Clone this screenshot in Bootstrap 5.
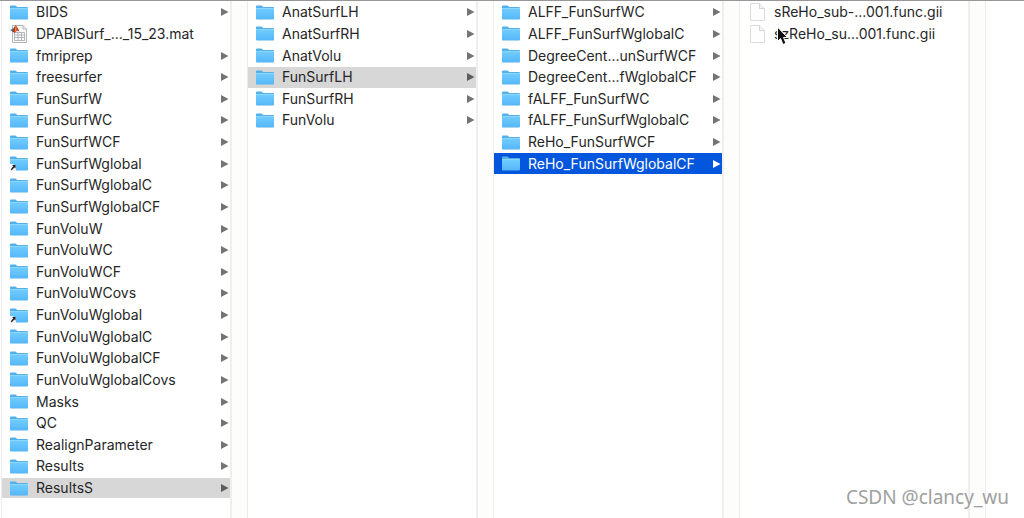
<!DOCTYPE html>
<html lang="en">
<head>
<meta charset="utf-8">
<meta name="viewport" content="width=device-width, initial-scale=1">
<title>ResultsS</title>
<link href="https://cdn.jsdelivr.net/npm/bootstrap@5.3.0/dist/css/bootstrap.min.css" rel="stylesheet">
<style>
  body { font-family: Inter, "Liberation Sans", sans-serif; font-size: 14px; color: #262626; background: #fff; }
  .browser { display: grid; grid-template-columns: 246fr 246fr 246fr 246fr 39fr; height: 100vh; border-top: 1px solid #999799; padding-left: 1px; }
  .pane { border-left: 1px solid #ececec; min-width: 0; }
  .files { display: grid; grid-template-rows: repeat(24, 1fr); row-gap: 1px; height: 100vh; padding-top: 1px; box-sizing: content-box; }
  .gutter { width: 17px; background: #fdfdfb; border-left: 2px solid #efefef; }
  .entry { font-size: 14px; line-height: 20px; padding: 0 1px 0 8px; gap: 8px; border: 0; background: none; color: inherit; white-space: nowrap; min-height: 0; }
  .entry svg { flex: none; }
  .entry .tri { fill: #747474; }
  .entry.open { background: #d7d7d7; }
  .entry.open .tri { fill: #5c5c5c; }
  .entry.current { background: #0456dc; color: #fff; }
  .entry.current .tri { fill: #fff; }
  .pointer { left: 776px; top: 26px; }
  .credit { right: 15px; bottom: 6px; font: 19px/30px "Noto Sans", sans-serif; color: #a0a0a0; text-shadow: 1px 0 0 #fff; }
</style>
</head>
<body class="overflow-hidden">
<svg width="0" height="0" class="position-absolute" aria-hidden="true">
  <defs>
    <linearGradient id="blue" x2="0" y2="1"><stop stop-color="#70cbfd"/><stop offset="1" stop-color="#56b8fa"/></linearGradient>
    <symbol id="folder" viewBox="0 0 18 15">
      <path d="M0 1.5Q0 .5 1 .5H5.300Q6 .5 6.500 1.200L7 2H17Q18 2 18 3V13.500Q18 14.500 17 14.500H1Q0 14.500 0 13.500Z" fill="#54b0e8"/>
      <path d="M0 4H18V13Q18 14 17 14H1Q0 14 0 13Z" fill="url(#blue)"/>
      <path d="M0 3.500H18" stroke="#8bd6ff"/>
    </symbol>
    <symbol id="alias" viewBox="0 0 18 15">
      <use href="#folder" width="18" height="15"/>
      <path d="M0 8H3L6 11V15H0Z" fill="#eef3f6"/>
      <path d="M2 9H5.500V12.500L4.300 11.400L1.800 14.200L.8 13.300L3.300 10.300Z" fill="#222"/>
    </symbol>
    <symbol id="matfile" viewBox="0 0 18 18">
      <path d="M2.500 .5H13L16.500 4V17.500H2.500Z" fill="#fafafa" stroke="#b5b5b5"/>
      <path d="M13 .5V4H16.500" fill="#e9e9e9" stroke="#b5b5b5"/>
      <path d="M4.500 7.500H14.500V15.500H4.500ZM4.500 10H14.500M4.500 12.500H14.500M8 7.500V15.500M11.500 7.500V15.500" fill="none" stroke="#b3b7bb"/>
      <path d="M0 5L3 3.500L5 1.500L4.500 6L3 7Z" fill="#397f9d"/>
      <path d="M3 5L5.500 0L7 2L9.500 6.500L7 5.500L4.500 8L2.500 6.500Z" fill="#b6331b"/>
      <path d="M5.500 0L6.500 2L6.500 5L4.500 8L5 4Z" fill="#ef8a28"/>
    </symbol>
    <symbol id="page" viewBox="0 0 18 18">
      <path d="M2.500 .5H11.500L16.500 5.500V17.500H2.500Z" fill="#fefefe" stroke="#dcdcdc"/>
      <path d="M11.500 .5V5.500H16.500" fill="#f4f4f4" stroke="#d4d4d4"/>
    </symbol>
    <symbol id="tri" viewBox="0 0 8 8"><path d="M0 0L7.500 4L0 8Z"/></symbol>
  </defs>
</svg>

<main class="browser" id="browser"></main>

<svg class="pointer position-absolute pe-none" width="12" height="20" viewBox="0 0 12 20" aria-hidden="true">
  <path d="M1.500 1V15.500L4.500 12.500L7 18.500L10 17.200L7.500 11.500H11.500Z" fill="#111" stroke="#fff"/>
</svg>
<div class="credit position-absolute">CSDN @clancy_wu</div>

<script>
  const panes = [
    { open: 'ResultsS', names: ['BIDS', 'DPABISurf_..._15_23.mat', 'fmriprep', 'freesurfer', 'FunSurfW', 'FunSurfWC', 'FunSurfWCF', 'FunSurfWglobal', 'FunSurfWglobalC', 'FunSurfWglobalCF', 'FunVoluW', 'FunVoluWC', 'FunVoluWCF', 'FunVoluWCovs', 'FunVoluWglobal', 'FunVoluWglobalC', 'FunVoluWglobalCF', 'FunVoluWglobalCovs', 'Masks', 'QC', 'RealignParameter', 'Results', 'ResultsS'] },
    { open: 'FunSurfLH', names: ['AnatSurfLH', 'AnatSurfRH', 'AnatVolu', 'FunSurfLH', 'FunSurfRH', 'FunVolu'] },
    { current: 'ReHo_FunSurfWglobalCF', names: ['ALFF_FunSurfWC', 'ALFF_FunSurfWglobalC', 'DegreeCent...unSurfWCF', 'DegreeCent...fWglobalCF', 'fALFF_FunSurfWC', 'fALFF_FunSurfWglobalC', 'ReHo_FunSurfWCF', 'ReHo_FunSurfWglobalCF'] },
    { names: ['sReHo_sub-...001.func.gii', 'szReHo_su...001.func.gii'] },
    { names: [] }
  ];
  const aliases = ['FunSurfWglobal', 'FunVoluWglobal'];

  function entry(name, pane) {
    const isFile = /\.(mat|gii)$/.test(name);
    const icon = name.endsWith('.mat') ? 'matfile' : name.endsWith('.gii') ? 'page' : aliases.includes(name) ? 'alias' : 'folder';
    const state = name === pane.open ? ' open' : name === pane.current ? ' current' : '';
    const arrow = isFile ? '' : '<svg class="tri" width="8" height="8" aria-hidden="true"><use href="#tri"/></svg>';
    return `<button type="button" class="entry d-flex align-items-center text-start w-100${state}">
      <svg width="18" height="${isFile ? 18 : 15}" aria-hidden="true"><use href="#${icon}"/></svg>
      <span class="flex-grow-1">${name}</span>${arrow}</button>`;
  }

  document.getElementById('browser').innerHTML = panes.map((pane, i) => `
    <section class="pane d-flex">
      <div class="files flex-grow-1">${pane.names.map(n => entry(n, pane)).join('')}</div>
      ${i < 4 ? '<div class="gutter flex-shrink-0"></div>' : ''}
    </section>`).join('');
</script>
<script src="https://cdn.jsdelivr.net/npm/bootstrap@5.3.0/dist/js/bootstrap.bundle.min.js"></script>
</body>
</html>
